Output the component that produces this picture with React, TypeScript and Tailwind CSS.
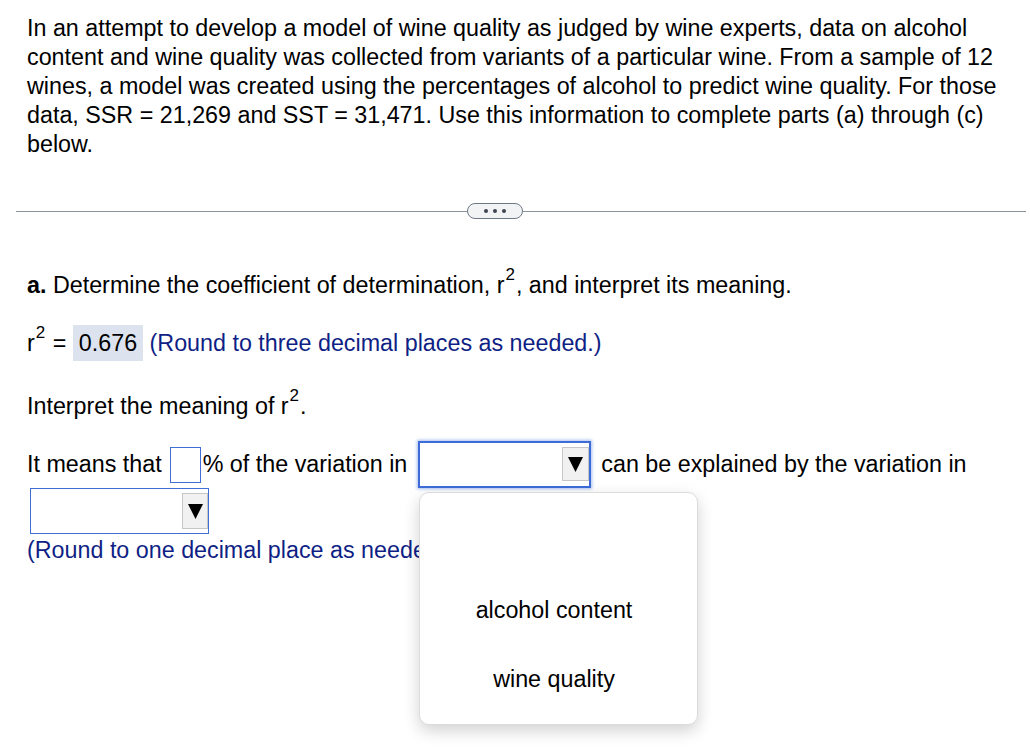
import React from "react"

const font = "font-['Liberation_Sans',Arial,sans-serif]"

const Arrow = ({ className }: { className: string }) => (
	<span
		className={`flex items-center justify-center border border-[#c6c6c6] bg-[#f1f1f1] ${className}`}
	>
		<svg width="15" height="16" viewBox="0 0 15 16">
			<polygon points="0,1 15,1 7.5,16" fill="#000" />
		</svg>
	</span>
)

const Sup = () => <sup className="top-[-13px] px-[1px] text-[17px]">2</sup>

export default function App() {
	return (
		<div className={`relative min-h-[756px] w-[1030px] bg-white text-[23.3px] leading-[29px] text-black ${font}`}>
			<div className="w-[1026px] pl-[16px]">
				<p className="px-[11px] pt-[14px]">
					In an attempt to develop a model of wine quality as judged by wine experts, data on
					alcohol content and wine quality was collected from variants of a particular wine. From a
					sample of 12 wines, a model was created using the percentages of alcohol to predict wine
					quality. For those data, SSR = 21,269 and SST = 31,471. Use this information to complete
					parts (a) through (c) below.
				</p>
			</div>

			<div className="mt-[44px] flex items-center pl-[16px]">
				<div className="h-px w-[451px] bg-[#8a929c]" />
				<button className="flex h-[16px] w-[56px] items-center justify-center gap-[5px] rounded-full border border-[#6d7885] bg-[#f2f3f5]">
					<span className="h-[4px] w-[4px] rounded-full bg-[#3d4550]" />
					<span className="h-[4px] w-[4px] rounded-full bg-[#3d4550]" />
					<span className="h-[4px] w-[4px] rounded-full bg-[#3d4550]" />
				</button>
				<div className="h-px w-[503px] bg-[#8a929c]" />
			</div>

			<div className="pl-[27px]">
				<p className="mt-[52px]">
					<b>a.</b> Determine the coefficient of determination, r<Sup />, and interpret its meaning.
				</p>

				<div className="mt-[25px] flex h-[36px] items-center whitespace-pre">
					<span>
						r<Sup /> ={" "}
					</span>
					<span className="flex h-[36px] items-center bg-[#dce3ee] px-[6px]">0.676</span>
					<span className="text-[#0f1f85]"> (Round to three decimal places as needed.)</span>
				</div>

				<p className="mt-[31px]">
					Interpret the meaning of r<Sup />.
				</p>

				<div className="mt-[20px] flex h-[47px] items-center whitespace-nowrap">
					<span>It means that</span>
					<span className="ml-[8px] h-[36px] w-[31px] border border-[#3f6fd6] bg-white" />
					<span className="ml-[2px]">% of the variation in</span>
					<span className="ml-[11px] flex h-[47px] w-[173px] items-start justify-end border-2 border-[#3d6cd8] bg-white pt-[4px] shadow-[0_0_3px_1px_rgba(61,108,216,0.45)]">
						<Arrow className="h-[34px] w-[27px]" />
					</span>
					<span className="ml-[10px]">can be explained by the variation in</span>
				</div>

				<div className="flex h-[46px]">
					<span className="ml-[3px] flex h-[46px] w-[179px] items-center justify-end border border-[#3f6fd6] bg-white">
						<Arrow className="h-[36px] w-[26px]" />
					</span>
				</div>

				<p className="mt-[2px] whitespace-nowrap text-[#0f1f85]">(Round to one decimal place as needed.)</p>
			</div>

			<div className="absolute left-[419px] top-[492px] w-[279px] rounded-[10px] border border-[#dcdcdc] bg-white pb-[10px] pr-[9px] pt-[14px] shadow-[0_6px_16px_rgba(0,0,0,0.18)]">
				<div className="h-[69px]" />
				<div className="flex h-[69px] items-center justify-center">alcohol content</div>
				<div className="flex h-[69px] items-center justify-center">wine quality</div>
			</div>
		</div>
	)
}
